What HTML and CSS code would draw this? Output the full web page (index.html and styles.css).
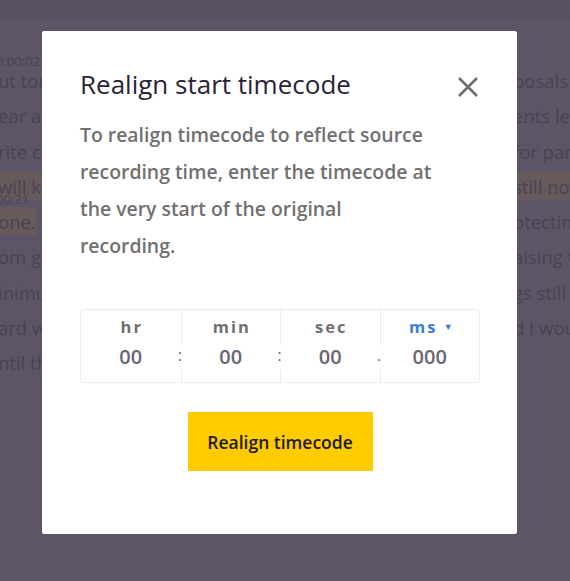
FILE: index.html
```html
<!DOCTYPE html>
<html lang="en">
<head>
<meta charset="utf-8">
<title>Realign start timecode</title>
<link rel="stylesheet" href="styles.css">
</head>
<body>
<div class="page">
  <div class="topbar"></div>
  <div class="transcript">
    <div class="para">
      <div class="stamp"><span class="stamp-l">0:00:02</span></div>
      <div class="line"><span class="left">ut tomorrow we will look at the proposals</span><span class="right">posals for the</span></div>
      <div class="line"><span class="left">ear about the various documents left</span><span class="right">ents left over</span></div>
      <div class="line"><span class="left">rite company accounts for parts</span><span class="right"> for parts of</span></div>
      <div class="line"><span class="left"><span class="hl">will keep what is still not</span></span><span class="right"><span class="hl">still not done</span></span></div>
    </div>
    <div class="para">
      <div class="stamp"><span class="stamp-l">00:21</span></div>
      <div class="line"><span class="left"><span class="hl">one.</span> It is about protecting</span><span class="right">otecting the</span></div>
      <div class="line"><span class="left">om going and raising</span><span class="right">aising the</span></div>
      <div class="line"><span class="left">inimum things still</span><span class="right">gs still to</span></div>
      <div class="line"><span class="left">ard work and I would</span><span class="right">d I would</span></div>
      <div class="line"><span class="left">ntil then</span><span class="right"></span></div>
    </div>
  </div>
</div>

<div class="modal" role="dialog" aria-labelledby="modal-title">
  <div class="modal-head">
    <h1 id="modal-title" class="modal-title">Realign start timecode</h1>
    <button class="close" aria-label="Close">
      <svg width="22" height="22" viewBox="0 0 22 22"><path d="M2 2 L20 20 M20 2 L2 20" stroke="#6e6e6e" stroke-width="2.6" stroke-linecap="butt" fill="none"/></svg>
    </button>
  </div>
  <p class="modal-text">To realign timecode to reflect source recording time, enter the timecode at the very start of the original recording.</p>

  <div class="tc">
    <div class="tc-cell">
      <div class="tc-label">hr</div>
      <div class="tc-value">00</div>
    </div>
    <div class="tc-cell">
      <span class="tc-sep">:</span>
      <div class="tc-label">min</div>
      <div class="tc-value">00</div>
    </div>
    <div class="tc-cell">
      <span class="tc-sep">:</span>
      <div class="tc-label">sec</div>
      <div class="tc-value">00</div>
    </div>
    <div class="tc-cell">
      <span class="tc-sep">.</span>
      <div class="tc-label tc-active">ms <span class="caret">▼</span></div>
      <div class="tc-value">000</div>
    </div>
  </div>

  <div class="actions">
    <button class="primary">Realign timecode</button>
  </div>
</div>
</body>
</html>
```

FILE: styles.css
```css
* { box-sizing: border-box; }

html, body {
  margin: 0;
  padding: 0;
  height: 100%;
}

body {
  background: #5d5566;
  font-family: "Open Sans", "Noto Sans", sans-serif;
  overflow: hidden;
}

.page {
  width: 570px;
  height: 581px;
  overflow: hidden;
}

.topbar {
  height: 20px;
  background: #5a5263;
  border-bottom: 1px solid #58505f;
}

.transcript {
  padding-top: 43px;
  color: #4a4256;
}

.para {
  display: flex;
  flex-direction: column;
}

.stamp {
  height: 0;
  font-size: 13px;
  line-height: 14px;
  margin-left: -4px;
  white-space: nowrap;
}

.stamp-l {
  display: block;
  margin-top: -9px;
}

.para + .para .stamp-l {
  margin-top: -12px;
}

.line {
  display: grid;
  grid-template-columns: 513px 57px;
  font-size: 18.5px;
  line-height: 35.3px;
  white-space: nowrap;
}

.left {
  overflow: hidden;
  margin-left: -2px;
}

.right {
  overflow: hidden;
}

.hl {
  background: #665a5b;
  padding: 2px 0 1px;
}

/* modal */
.modal {
  position: fixed;
  left: 42px;
  top: 31px;
  width: 475px;
  height: 503px;
  background: #ffffff;
  border-radius: 2px;
  padding: 37px 37px 0 38px;
}

.modal-head {
  display: flex;
  justify-content: space-between;
  align-items: center;
}

.modal-title {
  margin: 0;
  font-size: 26px;
  font-weight: 400;
  line-height: 32px;
  color: #2a2438;
}

.close {
  border: 0;
  background: none;
  padding: 0;
  width: 22px;
  height: 22px;
  margin-right: 1px;
  margin-top: 5px;
  cursor: pointer;
}

.close svg { display: block; }

.modal-text {
  margin: 16px 0 0;
  max-width: 357px;
  font-size: 19.4px;
  font-weight: 600;
  line-height: 37px;
  color: #707070;
}

.tc {
  margin-top: 45px;
  display: grid;
  grid-template-columns: repeat(4, 1fr);
  border: 1px solid #ececec;
  border-radius: 3px;
  height: 74px;
}

.tc-cell {
  position: relative;
  display: flex;
  flex-direction: column;
  align-items: center;
  padding-top: 6px;
}

.tc-cell + .tc-cell {
  border-left: 1px solid #ececec;
}

.tc-label {
  font-size: 16.5px;
  font-weight: 700;
  letter-spacing: 2px;
  line-height: 22px;
  color: #6f6f6f;
  padding-left: 2px;
}

.tc-active {
  color: #3b7dd8;
}

.caret {
  font-size: 9px;
  vertical-align: 3px;
  letter-spacing: 0;
  margin-left: 0;
}

.tc-value {
  margin-top: 7px;
  font-size: 20px;
  font-weight: 600;
  line-height: 24px;
  color: #6b6572;
}

.tc-sep {
  position: absolute;
  left: -5px;
  top: 35px;
  width: 7px;
  height: 25px;
  background: #fff;
  text-align: center;
  font-size: 17px;
  font-weight: 400;
  line-height: 20px;
  color: #6f6f6f;
}

.actions {
  display: flex;
  justify-content: center;
  margin-top: 29px;
}

.primary {
  width: 185px;
  height: 59px;
  border: 0;
  border-radius: 0;
  background: #ffcc00;
  font-family: "Open Sans", "Noto Sans", sans-serif;
  font-size: 17.5px;
  font-weight: 600;
  color: #1d1a1a;
  cursor: pointer;
}
```
